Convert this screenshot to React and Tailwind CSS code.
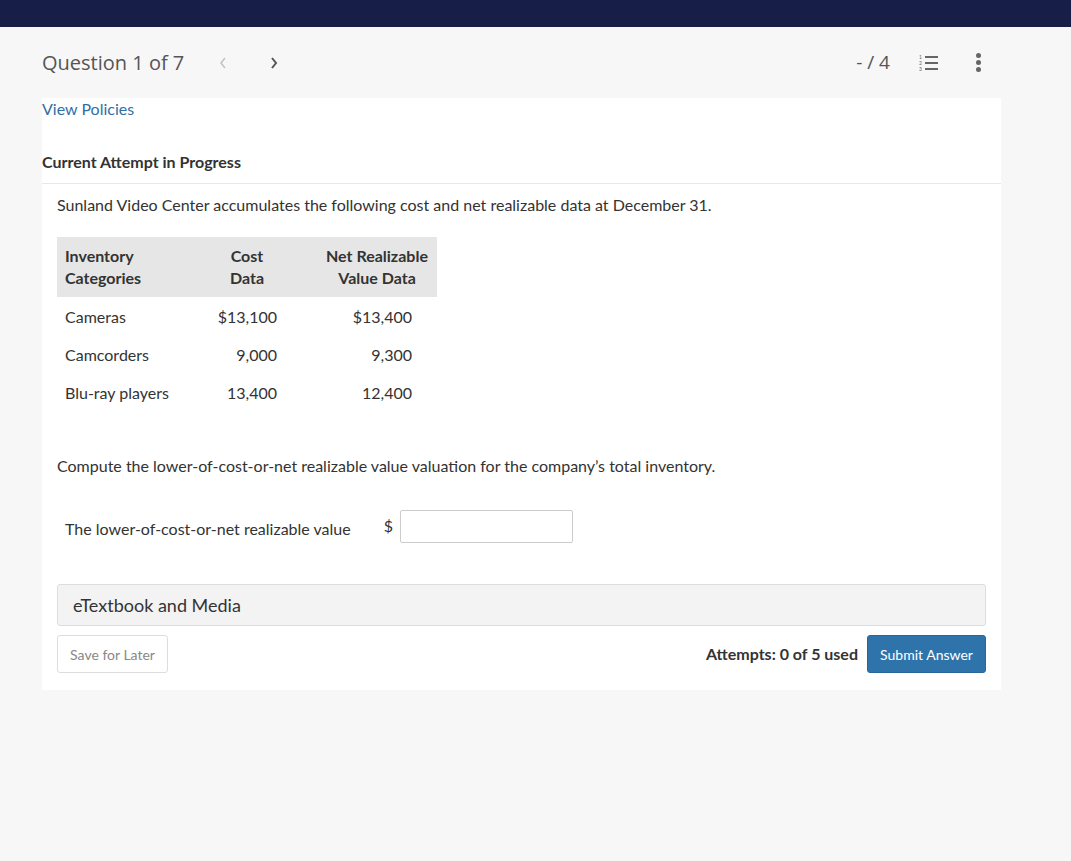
import { useState } from "react";

const rows = [
  { name: "Cameras", cost: "$13,100", nrv: "$13,400" },
  { name: "Camcorders", cost: "9,000", nrv: "9,300" },
  { name: "Blu-ray players", cost: "13,400", nrv: "12,400" },
];

function ListIcon() {
  return (
    <svg width="20" height="18" viewBox="0 0 20 18" className="text-[#666]">
      <text x="0" y="5" fontSize="5" fill="currentColor" fontFamily="Lato, sans-serif">1</text>
      <text x="0" y="11" fontSize="5" fill="currentColor" fontFamily="Lato, sans-serif">2</text>
      <text x="0" y="17" fontSize="5" fill="currentColor" fontFamily="Lato, sans-serif">3</text>
      <rect x="6" y="2" width="13" height="2" fill="currentColor" />
      <rect x="6" y="8" width="13" height="2" fill="currentColor" />
      <rect x="6" y="14" width="13" height="2" fill="currentColor" />
    </svg>
  );
}

export default function App() {
  const [value, setValue] = useState("");

  return (
    <div className="min-h-[861px] bg-[#f7f7f7] font-['Lato',sans-serif] text-[#333]">
      <div className="h-[27px] bg-[#171f48]" />

      <div className="flex items-center h-[71px] pl-[42px] pr-[90px]">
        <span className="font-['Open_Sans',sans-serif] text-[20px] text-[#555]">Question 1 of 7</span>
        <span className="ml-[34px] text-[#c4c4c4]">
          <svg width="10" height="14" viewBox="0 0 10 14"><path d="M7 2 L3 7 L7 12" stroke="currentColor" strokeWidth="1.6" fill="none" /></svg>
        </span>
        <span className="ml-[41px] text-[#555]">
          <svg width="10" height="14" viewBox="0 0 10 14"><path d="M3 2 L7 7 L3 12" stroke="currentColor" strokeWidth="2" fill="none" /></svg>
        </span>
        <span className="ml-auto font-['Open_Sans',sans-serif] text-[19px] text-[#555]">- / 4</span>
        <span className="ml-[29px]"><ListIcon /></span>
        <span className="ml-[37px] flex flex-col gap-[2px]">
          <span className="w-[5px] h-[5px] rounded-full bg-[#666]" />
          <span className="w-[5px] h-[5px] rounded-full bg-[#666]" />
          <span className="w-[5px] h-[5px] rounded-full bg-[#666]" />
        </span>
      </div>

      <div className="ml-[42px] w-[959px] bg-white pb-[17px]">
        <a href="#" className="block text-[16px] leading-[22px] text-[#2f6fa7]">View Policies</a>
        <h2 className="mt-[31px] text-[16px] font-bold text-[#333] leading-[22px]">Current Attempt in Progress</h2>
        <div className="mt-[10px] border-t border-[#e8e8e8]" />

        <div className="px-[15px]">
          <p className="mt-[10px] text-[16px] leading-[22px]">
            Sunland Video Center accumulates the following cost and net realizable data at December 31.
          </p>

          <table className="mt-[21px] w-[380px] text-[16px] border-collapse table-fixed">
            <colgroup>
              <col className="w-[140px]" />
              <col className="w-[100px]" />
              <col className="w-[140px]" />
            </colgroup>
            <thead>
              <tr className="bg-[#e6e6e6] leading-[22px]">
                <th className="h-[60px] pl-[8px] text-left font-bold">Inventory<br />Categories</th>
                <th className="text-center font-bold">Cost<br />Data</th>
                <th className="text-center font-bold pl-[20px]">Net Realizable<br />Value Data</th>
              </tr>
            </thead>
            <tbody>
              {rows.map((r) => (
                <tr key={r.name} className="h-[38px]">
                  <td className="pl-[8px] pt-[2px]">{r.name}</td>
                  <td className="text-right pr-[20px] pt-[2px]">{r.cost}</td>
                  <td className="text-right pr-[25px] pt-[2px]">{r.nrv}</td>
                </tr>
              ))}
            </tbody>
          </table>

          <p className="mt-[44px] text-[16px] leading-[22px]">
            Compute the lower-of-cost-or-net realizable value valuation for the company’s total inventory.
          </p>

          <div className="mt-[33px] flex items-center pl-[8px]">
            <span className="text-[16px] pt-[4px]">The lower-of-cost-or-net realizable value</span>
            <span className="ml-[33px] text-[16px] -mt-[2px]">$</span>
            <input
              value={value}
              onChange={(e) => setValue(e.target.value)}
              className="ml-[7px] w-[173px] h-[33px] border border-[#ccc] rounded-[2px] px-2 outline-none"
            />
          </div>

          <div className="mt-[41px] h-[42px] flex items-center bg-[#f3f3f3] border border-[#ddd] rounded-[3px] pl-[15px] text-[18px] text-[#333]">
            eTextbook and Media
          </div>

          <div className="mt-[9px] flex items-center">
            <button className="h-[38px] w-[111px] border border-[#ddd] rounded-[3px] bg-white text-[14px] text-[#888]">
              Save for Later
            </button>
            <span className="ml-auto text-[16px] font-bold text-[#333]">Attempts: 0 of 5 used</span>
            <button className="ml-[9px] h-[38px] w-[119px] rounded-[3px] bg-[#2e74ab] border border-[#2a6698] text-[14px] text-white">
              Submit Answer
            </button>
          </div>
        </div>
      </div>
    </div>
  );
}
